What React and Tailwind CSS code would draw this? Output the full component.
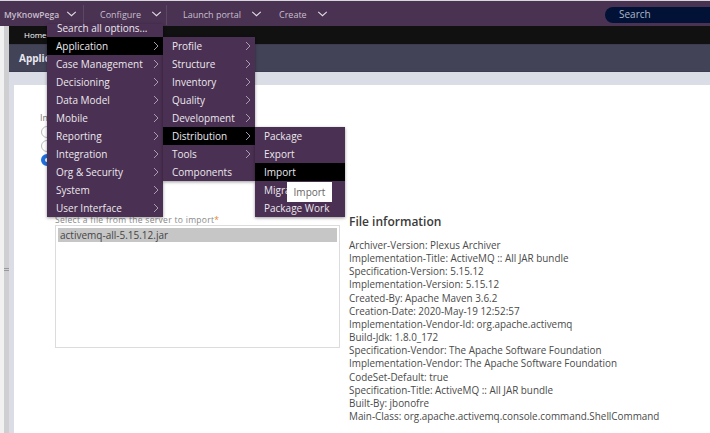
import React from 'react';

const font = { fontFamily: '"Open Sans", "Noto Sans", sans-serif' };

const mainItems = ['Application', 'Case Management', 'Decisioning', 'Data Model', 'Mobile', 'Reporting', 'Integration', 'Org & Security', 'System', 'User Interface'];
const appItems = ['Profile', 'Structure', 'Inventory', 'Quality', 'Development', 'Distribution', 'Tools', 'Components'];
const distItems = ['Package', 'Export', 'Import', 'Migrate', 'Package Work'];
const fileInfo = [
  'Archiver-Version: Plexus Archiver',
  'Implementation-Title: ActiveMQ :: All JAR bundle',
  'Specification-Version: 5.15.12',
  'Implementation-Version: 5.15.12',
  'Created-By: Apache Maven 3.6.2',
  'Creation-Date: 2020-May-19 12:52:57',
  'Implementation-Vendor-Id: org.apache.activemq',
  'Build-Jdk: 1.8.0_172',
  'Specification-Vendor: The Apache Software Foundation',
  'Implementation-Vendor: The Apache Software Foundation',
  'CodeSet-Default: true',
  'Specification-Title: ActiveMQ :: All JAR bundle',
  'Built-By: jbonofre',
  'Main-Class: org.apache.activemq.console.command.ShellCommand',
];

function Chevron() {
  return (
    <svg viewBox="0 0 12 7" className="w-[11px] h-[6px] mb-[2px] text-[#e2dce4]" fill="none" stroke="currentColor" strokeWidth="1.3">
      <path d="M1 1l5 4.5L11 1" />
    </svg>
  );
}

function Arrow() {
  return (
    <svg viewBox="0 0 6 10" className="w-[6px] h-[10px] text-[#a99bb0]" fill="none" stroke="currentColor" strokeWidth="1">
      <path d="M1 1l4 4-4 4" />
    </svg>
  );
}

function MenuRow({ label, active, arrow }) {
  return (
    <div className={`h-[18px] flex items-center justify-between pl-[9px] pr-[4px] text-[10px] text-[#ece8ee] ${active ? 'bg-black' : ''}`}>
      <span>{label}</span>
      {arrow && <Arrow />}
    </div>
  );
}

export default function App() {
  return (
    <div style={font} className="relative w-[710px] h-[433px] overflow-hidden bg-white">
      <div className="h-[1px] bg-[#d9d5dc]" />
      <div className="h-[25px] bg-[#4a3252] flex items-center pl-[4px] pt-[3px] text-[#c9bfcd]">
        <div className="w-[80px] flex items-center gap-[7px] text-[8.5px] font-semibold border-r border-[#5d4765] h-[20px]">
          <span>MyKnowPega</span>
          <Chevron />
        </div>
        <div className="w-[83px] pl-[16px] flex items-center gap-[10px] text-[9px] border-r border-[#5d4765] h-[20px]">
          <span>Configure</span>
          <Chevron />
        </div>
        <div className="w-[112px] pl-[16px] flex items-center gap-[10px] text-[9px]">
          <span>Launch portal</span>
          <Chevron />
        </div>
        <div className="flex items-center gap-[10px] text-[9px]">
          <span>Create</span>
          <Chevron />
        </div>
        <div className="ml-auto w-[105px] h-[16px] -mt-[1px] bg-[#011236] rounded-l-full pl-[14px] flex items-center text-[10px] text-[#aeb8c9]">
          Search
        </div>
      </div>
      <div className="flex h-[407px]">
        <div className="w-[9px] shrink-0 flex">
          <div className="w-[4px] bg-[#f1f1f1]" />
          <div className="w-[5px] bg-[#cfcfd2] flex flex-col justify-center gap-[1px] pt-[80px]">
            <div className="h-[1px] bg-[#999]" />
            <div className="h-[1px] bg-[#999]" />
          </div>
        </div>
        <div className="flex-1 flex flex-col min-w-0">
          <div className="h-[18px] bg-[#111111] pl-[15px] flex items-center text-[8px] text-white">Home</div>
          <div className="h-[28px] bg-[#434358] border-y border-[#3c3c50] pl-[10px] flex items-center text-[10px] font-bold text-[#e8e8ee]">
            Application Distribution
          </div>
          <div className="flex-1 bg-[#dadde5] pl-[5px] pt-[13px]">
            <div className="h-full bg-white pl-[26px]">
              <div className="pt-[27px] h-[41px] text-[9px] leading-[11px] text-[#777]">Import</div>
              <div className="flex flex-col gap-[2px] pl-[1px]">
                <div className="w-[12px] h-[12px] rounded-full border border-[#bbb]" />
                <div className="w-[12px] h-[12px] rounded-full border border-[#bbb]" />
                <div className="w-[12px] h-[12px] rounded-full border-[4px] border-[#1f6fe0]" />
              </div>
              <div className="flex mt-[48px] pl-[15px]">
                <div className="w-[285px] shrink-0">
                  <div className="text-[8.5px] leading-[11px] text-[#8a8a8a] tracking-[0.3px]">
                    Select a file from the server to import<span className="text-[#e8872c]">*</span>
                  </div>
                  <div className="h-[123px] border border-[#dcdcdc] p-[2px]">
                    <div className="h-[14px] bg-[#c6c6c6] pl-[2px] text-[10px] leading-[14px] text-[#444]">activemq-all-5.15.12.jar</div>
                  </div>
                </div>
                <div className="ml-[9px]">
                  <div className="text-[12px] leading-[16px] font-semibold text-[#3a3a3a]">File information</div>
                  <div className="mt-[9px]">
                    {fileInfo.map((line) => (
                      <div key={line} className="text-[9.9px] leading-[13.15px] text-[#4a4a4a]">{line}</div>
                    ))}
                  </div>
                </div>
              </div>
            </div>
          </div>
        </div>
      </div>

      <div className="absolute left-[47px] top-[24px] w-[116px] bg-[#4a3052] shadow-[0_1px_3px_rgba(0,0,0,0.4)]">
        <div className="h-[13px] pl-[10px] text-[10px] leading-[8px] text-[#ece8ee]">Search all options...</div>
        {mainItems.map((item, i) => (
          <MenuRow key={item} label={item} active={i === 0} arrow />
        ))}
      </div>
      <div className="absolute left-[163px] top-[37px] w-[92px] bg-[#4a3052] shadow-[0_1px_3px_rgba(0,0,0,0.4)]">
        {appItems.map((item) => (
          <MenuRow key={item} label={item} active={item === 'Distribution'} arrow={item !== 'Components'} />
        ))}
      </div>
      <div className="absolute left-[255px] top-[127px] w-[90px] bg-[#4a3052] shadow-[0_1px_3px_rgba(0,0,0,0.4)]">
        {distItems.map((item) => (
          <MenuRow key={item} label={item} active={item === 'Import'} />
        ))}
      </div>
      <div className="absolute left-[287px] top-[182px] w-[45px] h-[20px] bg-white text-[10px] leading-[20px] text-center text-[#666]">
        Import
      </div>
    </div>
  );
}
